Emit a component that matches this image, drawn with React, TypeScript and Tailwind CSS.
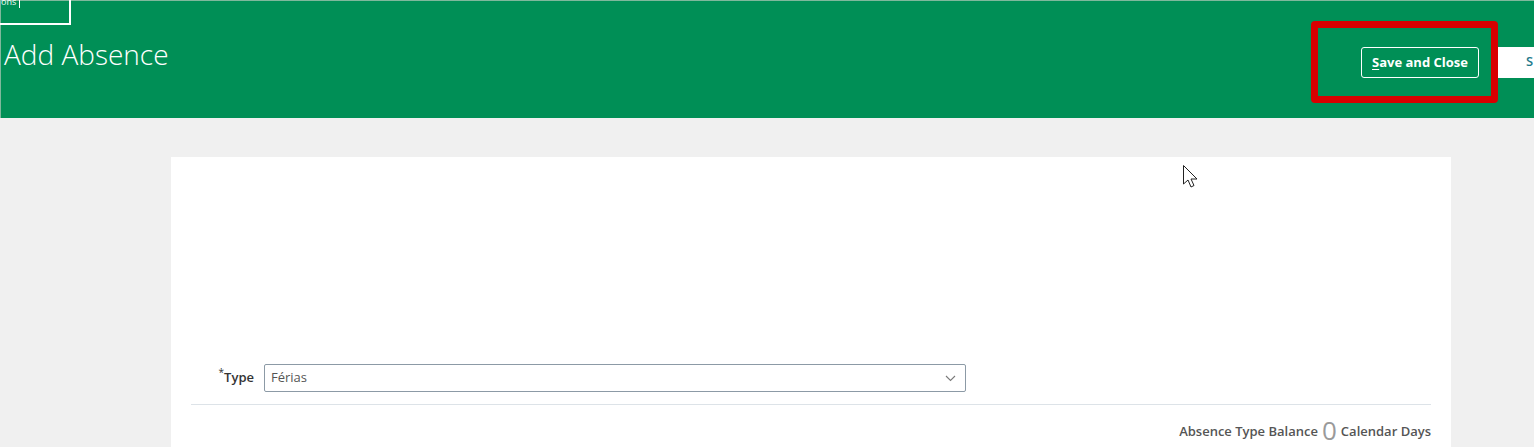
import React from "react";

export default function App() {
  return (
    <div className="w-[1534px] h-[447px] overflow-hidden bg-[#f0f0f0] relative" style={{ fontFamily: '"Open Sans", "Noto Sans", sans-serif' }}>
      {/* Header */}
      <div className="h-[118px] bg-[#008f56] border-l border-t border-[#7fb89c] relative flex flex-col">
        <div className="h-[25px] w-[71px] border-r-2 border-b-2 border-white -mt-[1px] -ml-[1px] relative flex items-start">
          <span className="text-white text-[9px] leading-none -mt-[3px] ml-[1px]">ons</span>
          <span className="absolute left-[19px] top-0 h-[8px] w-px bg-white"></span>
        </div>
        <div className="flex items-start justify-between">
          <h1 className="text-white text-[28px] font-light leading-none ml-[3px] mt-[15px]">Add Absence</h1>
          <div className="flex items-center mt-[-4px]">
            <div className="w-[187px] h-[82px] border-[7px] border-[#d90000] rounded-[4px] flex items-center justify-end pr-[12px]">
              <button className="h-[31px] w-[118px] border border-white rounded-[3px] text-white text-[13px] font-bold leading-none flex items-center justify-center">
                <span className="underline underline-offset-[2px]">S</span>ave and Close
              </button>
            </div>
            <div className="w-[36px] h-[31px] bg-white flex items-center pl-[28px] text-[#1f7a8c] text-[13px] font-semibold overflow-hidden">S</div>
          </div>
        </div>
      </div>

      {/* Body */}
      <div className="pt-[39px] pl-[171px] pr-[83px]">
        <div className="bg-white h-[300px] px-[20px] pt-[207px]">
          <div className="flex items-center h-[28px]">
            <label className="w-[73px] text-right pr-[10px] text-[13px] font-semibold text-[#333]">
              <span className="text-[10px] font-normal align-top relative top-[-3px]">*</span>Type
            </label>
            <div className="w-[702px] h-[28px] border border-[#8c9aa6] rounded-[2px] flex items-center justify-between pl-[6px] pr-[8px]">
              <span className="text-[13px] text-[#555]">Férias</span>
              <svg width="11" height="7" viewBox="0 0 11 7" className="mr-[1px]">
                <path d="M1 1 L5.5 5.5 L10 1" fill="none" stroke="#7a7a7a" strokeWidth="1.1" />
              </svg>
            </div>
          </div>
          <div className="mt-[12px] h-px bg-[#dde3e8]"></div>
          <div className="flex justify-end items-end mt-[12px] text-[13px] font-semibold text-[#555] gap-[4px]">
            <span>Absence Type Balance</span>
            <span className="text-[26px] font-normal text-[#9a9a9a] leading-none mb-[-2px]">0</span>
            <span>Calendar Days</span>
          </div>
        </div>
      </div>

      {/* Mouse cursor */}
      <svg className="absolute left-[1183px] top-[165px]" width="20" height="27" viewBox="0 0 20 27">
        <path d="M0.5 0.5 L0.5 19 L5 15 L8 22 L11 20.5 L8 14 L14 14 Z" fill="white" stroke="#222" strokeWidth="1" />
      </svg>
    </div>
  );
}
